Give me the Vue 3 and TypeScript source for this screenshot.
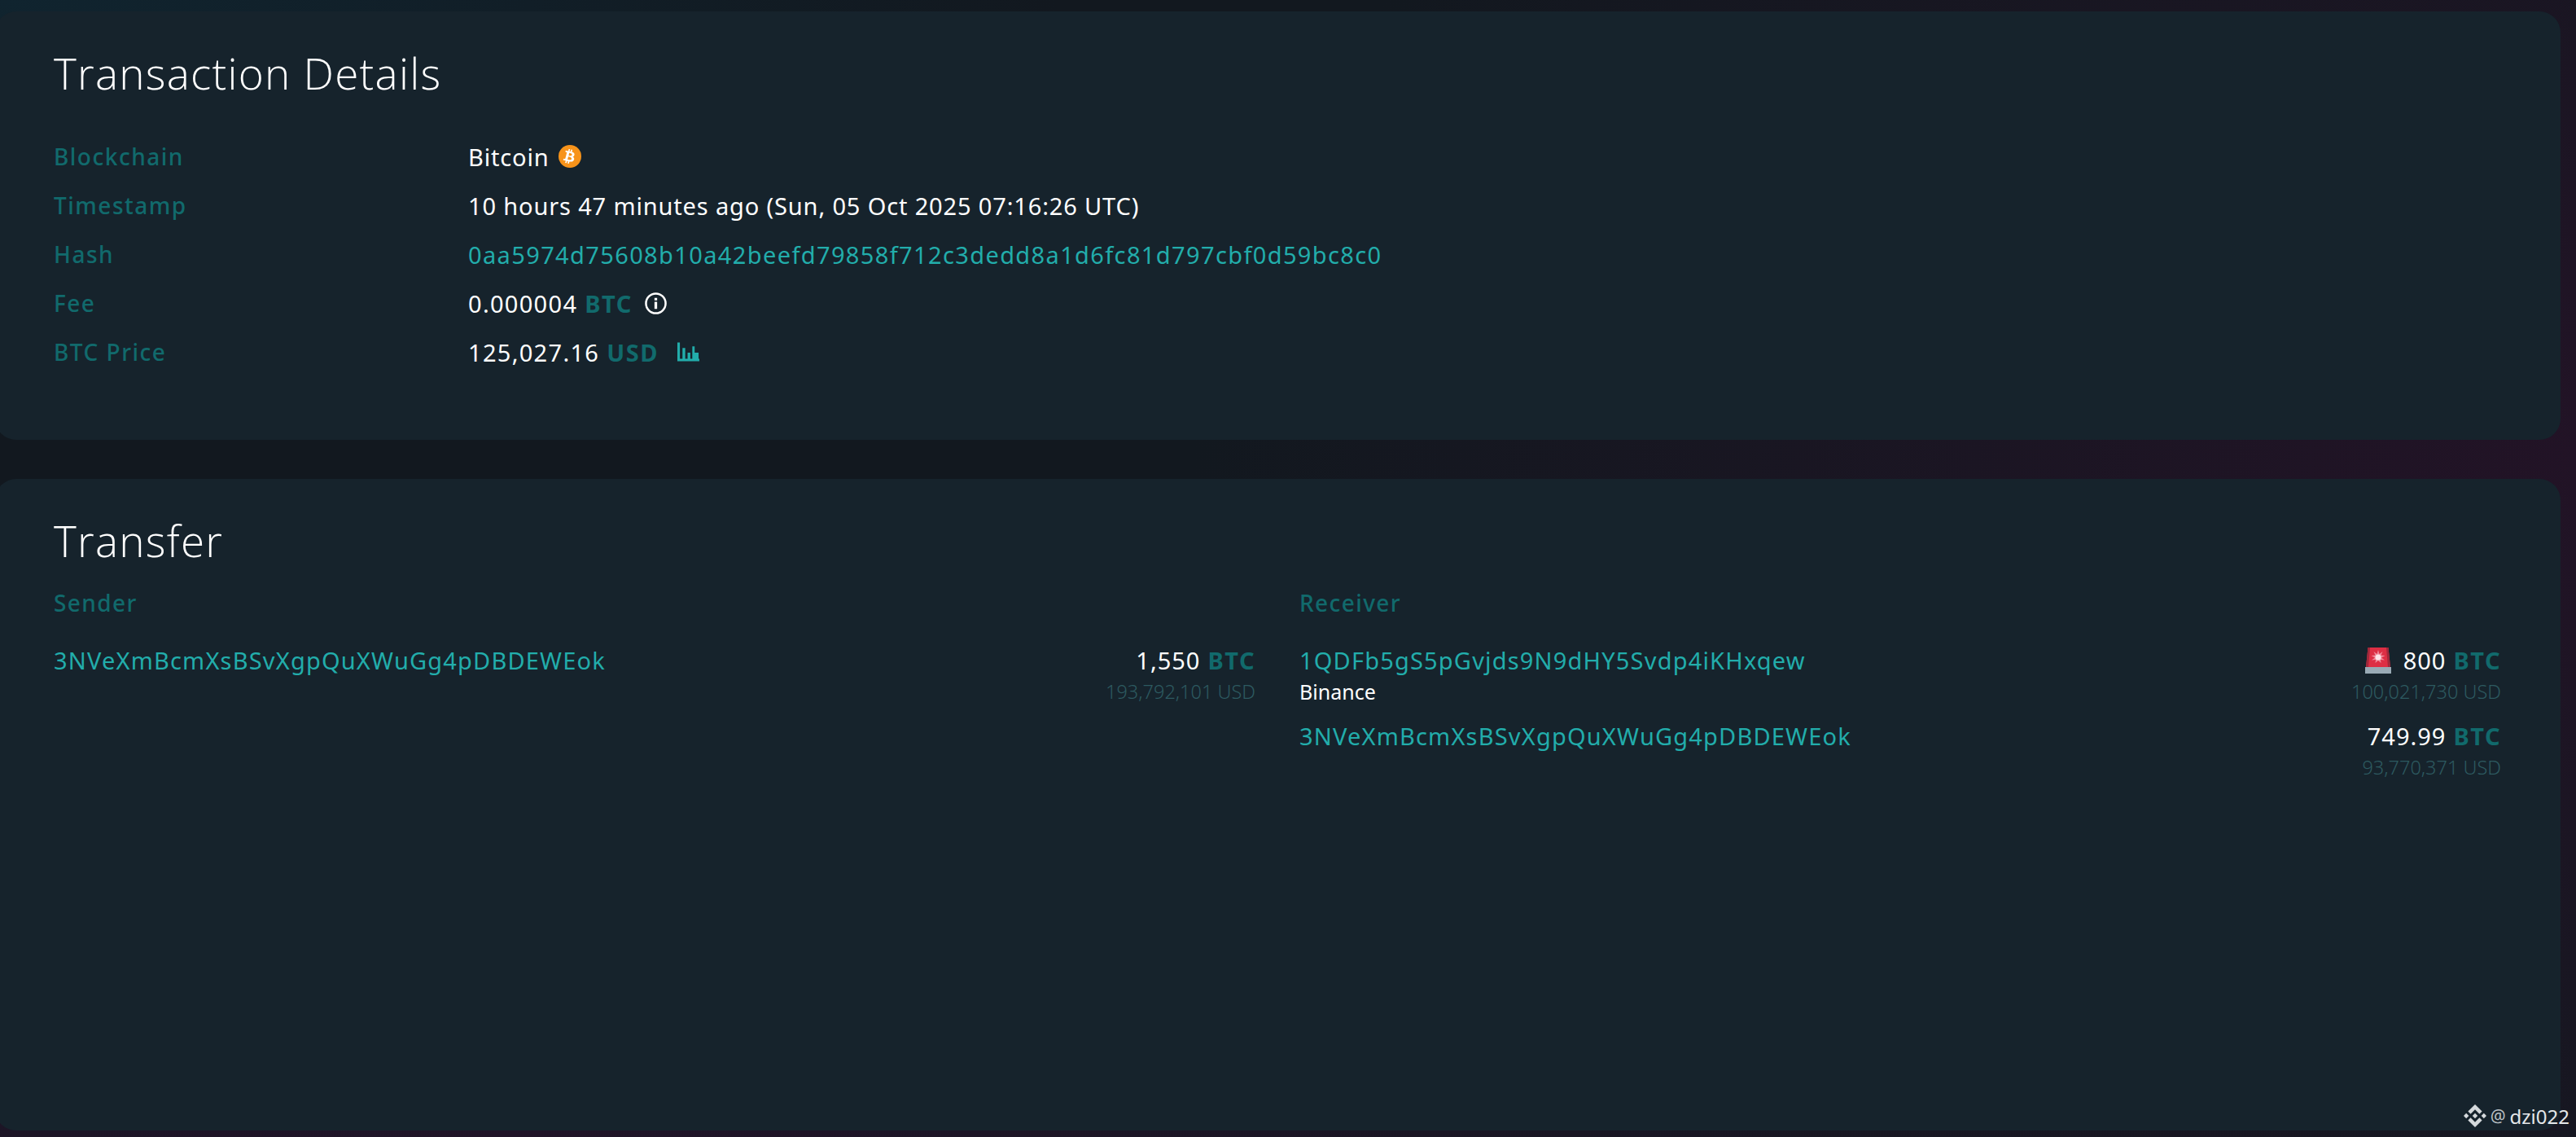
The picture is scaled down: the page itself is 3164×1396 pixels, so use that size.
<script setup lang="ts">
interface DetailRow {
  label: string
  kind: string
}

const rows: DetailRow[] = [
  { label: 'Blockchain', kind: 'chain' },
  { label: 'Timestamp', kind: 'time' },
  { label: 'Hash', kind: 'hash' },
  { label: 'Fee', kind: 'fee' },
  { label: 'BTC Price', kind: 'price' },
]

const receivers = [
  { address: '1QDFb5gS5pGvjds9N9dHY5Svdp4iKHxqew', owner: 'Binance', amount: '800', usd: '100,021,730 USD', alert: true },
  { address: '3NVeXmBcmXsBSvXgpQuXWuGg4pDBDEWEok', owner: '', amount: '749.99', usd: '93,770,371 USD', alert: false },
]
</script>

<template>
  <div class="page">
    <section class="card details">
      <h2>Transaction Details</h2>
      <div v-for="row in rows" :key="row.kind" class="row">
        <div class="label">{{ row.label }}</div>
        <div v-if="row.kind === 'chain'" class="value">
          Bitcoin
          <svg class="coin" viewBox="0 0 28 28">
            <circle cx="14" cy="14" r="14" fill="#f7931a" />
            <path d="M19.6 12.2c.3-1.9-1.2-2.9-3.1-3.6l.6-2.6-1.6-.4-.6 2.5-1.3-.3.6-2.5-1.6-.4-.6 2.6-1-.3-2.2-.5-.4 1.7s1.2.3 1.1.3c.6.2.8.6.7.9l-1.8 7c-.1.2-.3.5-.8.4 0 0-1.2-.3-1.2-.3l-.8 1.8 2.1.5 1.1.3-.6 2.6 1.6.4.6-2.6 1.3.3-.6 2.6 1.6.4.7-2.6c2.7.5 4.7.3 5.6-2.1.7-2-.1-3.1-1.5-3.9 1-.2 1.8-1 2-2.4zm-3.6 5c-.5 2-3.8.9-4.9.6l.9-3.5c1.1.3 4.5.8 4 2.9zm.5-5c-.4 1.8-3.2.9-4.1.7l.8-3.2c.9.2 3.8.6 3.3 2.500z" fill="#fff" />
          </svg>
        </div>
        <div v-else-if="row.kind === 'time'" class="value">10 hours 47 minutes ago (Sun, 05 Oct 2025 07:16:26 UTC)</div>
        <div v-else-if="row.kind === 'hash'" class="value link hash">0aa5974d75608b10a42beefd79858f712c3dedd8a1d6fc81d797cbf0d59bc8c0</div>
        <div v-else-if="row.kind === 'fee'" class="value figure">
          0.000004 <span class="unit">BTC</span>
          <svg class="info" viewBox="0 0 28 28">
            <circle cx="14" cy="14" r="12.500" fill="none" stroke="#fff" stroke-width="2.600" />
            <rect x="12.300" y="12" width="3.400" height="9" fill="#fff" />
            <rect x="12.300" y="7" width="3.400" height="3.200" fill="#fff" />
          </svg>
        </div>
        <div v-else class="value figure">
          125,027.16 <span class="unit">USD</span>
          <svg class="bars" viewBox="0 0 28 24">
            <path d="M0 0h3.200v20.800H28V24H0zM6.500 7h3.500v13.800H6.500zM13 13h3.500v7.800H13zM19 5h3v15.800h-3zM22 13h5v7.800h-5z" fill="#22adab" />
          </svg>
        </div>
      </div>
    </section>

    <section class="card transfer">
      <h2>Transfer</h2>
      <div class="columns">
        <div class="column">
          <div class="heading">Sender</div>
          <div class="entry">
            <div class="address">
              <a class="link">3NVeXmBcmXsBSvXgpQuXWuGg4pDBDEWEok</a>
            </div>
            <div class="amount">
              <div class="btc">1,550 <span class="unit">BTC</span></div>
              <div class="usd">193,792,101 USD</div>
            </div>
          </div>
        </div>
        <div class="column">
          <div class="heading">Receiver</div>
          <div v-for="item in receivers" :key="item.address" class="entry">
            <div class="address">
              <a class="link">{{ item.address }}</a>
              <div v-if="item.owner" class="owner">{{ item.owner }}</div>
            </div>
            <div class="amount">
              <div class="btc">
                <svg v-if="item.alert" class="siren" viewBox="0 0 32 32">
                  <path d="M3.500 0h25L31 24H1z" fill="#dd2e44" />
                  <path d="M3.500 0h2.500L4 24H1zM26 0h2.500L31 24h-3z" fill="#a0283a" />
                  <path d="M16 3l1.500 5 4-3-2 4.500 5 .5-4.500 2.500 4 3-5-.5.500 4-3.500-3-3.500 3 .5-4-5 .5 4-3L7.500 10l5-.5-2-4.500 4 3z" fill="#f08a9a" />
                  <circle cx="16" cy="12" r="3.500" fill="#fde4e8" />
                  <rect x="0" y="24" width="32" height="8" fill="#99aab5" />
                </svg>
                {{ item.amount }} <span class="unit">BTC</span>
              </div>
              <div class="usd">{{ item.usd }}</div>
            </div>
          </div>
        </div>
      </div>
    </section>

    <div class="credit">
      <svg class="bnb" viewBox="0 0 126 126">
        <path d="M38.500 53 63 28.500 87.500 53l14.300-14.300L63 0 24.200 38.800zM0 63l14.300-14.300L28.600 63 14.300 77.300zM38.500 73 63 97.500 87.500 73l14.300 14.300L63 126 24.200 87.200zM97.400 63l14.300-14.300L126 63l-14.300 14.300zM77.500 63 63 48.500 48.500 63 63 77.500z" fill="#d5d9dc" />
      </svg>
      <span class="at">@</span>
      <span>dzi022</span>
    </div>
  </div>
</template>

<style>
html,
body {
  margin: 0;
  background: #131b25;
}
</style>

<style scoped>
.page {
  position: relative;
  box-sizing: border-box;
  height: 1396px;
  overflow: hidden;
  padding: 14px 19px 8px 0;
  display: flex;
  flex-direction: column;
  gap: 48px;
  background:
    radial-gradient(ellipse 1300px 420px at 0 0, #10242f 0%, rgba(16, 36, 47, 0) 100%),
    radial-gradient(ellipse 1700px 1100px at 100% 40%, #221326 0%, rgba(34, 19, 38, 0) 100%),
    radial-gradient(ellipse 2600px 700px at 20% 100%, #201428 0%, rgba(32, 20, 40, 0) 100%),
    #12181f;
  font-family: "Noto Sans", "Open Sans", sans-serif;
  font-size: 29px;
  color: #fff;
}

.card {
  box-sizing: border-box;
  margin-left: -6px;
  background: #16232c;
  border-radius: 26px;
  padding-left: 72px;
  padding-right: 73px;
}

.details {
  height: 526px;
  padding-top: 44px;
}

.transfer {
  flex: 1;
  padding-top: 44px;
}

h2 {
  margin: 0;
  font-family: "Open Sans", sans-serif;
  font-size: 53px;
  font-weight: 300;
  line-height: 64px;
  letter-spacing: 1.25px;
}

.details h2 {
  margin-bottom: 40px;
}

.row {
  display: flex;
  align-items: center;
  height: 60px;
}

.label {
  width: 509px;
  font-size: 28px;
  font-weight: 500;
  letter-spacing: 1.5px;
  color: #116a6c;
}

.value {
  display: flex;
  align-items: center;
  gap: 9px;
  letter-spacing: 0.85px;
}

.figure {
  letter-spacing: 1.3px;
}

.link {
  color: #22adab;
}

.hash {
  letter-spacing: 1.37px;
}

.unit {
  font-weight: 700;
  letter-spacing: 1.5px;
  color: #116a6c;
}

.coin {
  width: 28px;
  height: 28px;
  margin-left: 2px;
}

.info {
  width: 27px;
  height: 27px;
  margin-left: 6px;
}

.bars {
  width: 27px;
  height: 24px;
  margin-left: 14px;
}

.columns {
  display: grid;
  grid-template-columns: 1fr 1fr;
  column-gap: 54px;
  margin-top: 24px;
}

.heading {
  font-size: 28px;
  font-weight: 500;
  letter-spacing: 1.4px;
  color: #116a6c;
  line-height: 40px;
  margin-bottom: 32px;
}

.entry {
  display: flex;
  justify-content: space-between;
  margin-bottom: 17px;
}

.address {
  line-height: 38px;
  letter-spacing: 1.18px;
}

.owner {
  font-size: 25px;
  line-height: 38px;
  letter-spacing: 0;
}

.amount {
  text-align: right;
}

.btc {
  display: flex;
  justify-content: flex-end;
  align-items: center;
  gap: 9px;
  line-height: 38px;
  letter-spacing: 1px;
}

.usd {
  font-size: 23.500px;
  line-height: 38px;
  font-weight: 300;
  color: #2d5a60;
}

.siren {
  width: 32px;
  height: 32px;
  margin-right: 6px;
}

.credit {
  position: absolute;
  right: 8px;
  bottom: 6px;
  display: flex;
  align-items: center;
  gap: 5px;
  height: 40px;
  font-size: 24px;
  color: #e4e7e9;
}

.bnb {
  width: 28px;
  height: 28px;
}

.at {
  font-size: 21px;
  color: #b9c0c4;
}
</style>
